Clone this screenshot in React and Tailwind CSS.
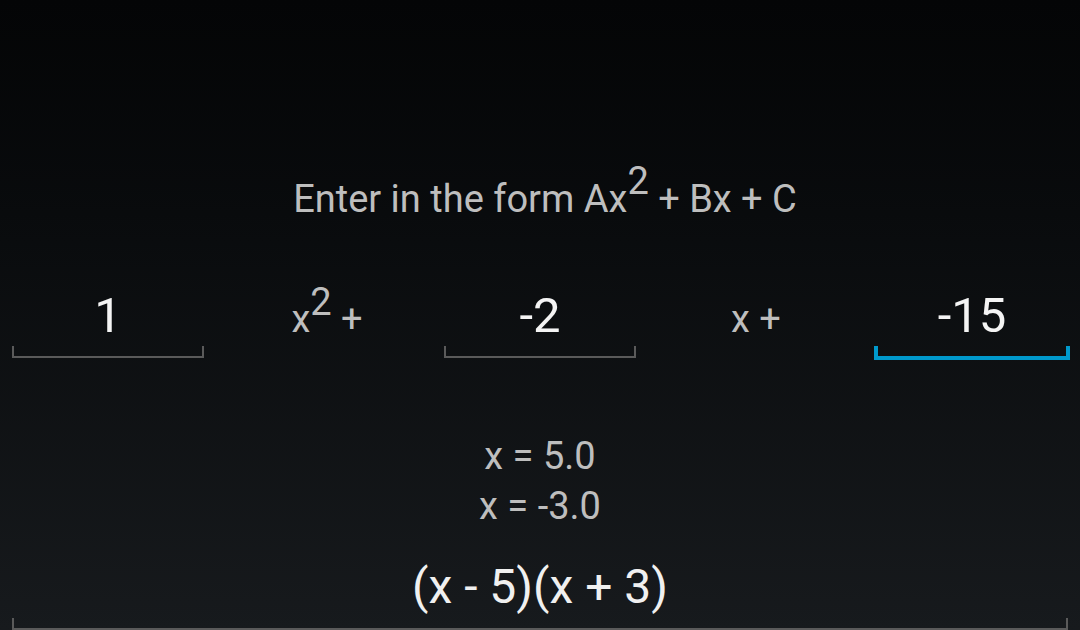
export default function App() {
  const font = { fontFamily: 'Roboto, "Noto Sans", sans-serif' };
  return (
    <div
      className="w-[1080px] h-[630px] overflow-hidden flex flex-col bg-linear-to-b from-[#040506] to-[#171a1d]"
      style={font}
    >
      <div className="pt-[177px] pl-[10px] text-center text-[38px] leading-[44px] text-[#bebebe]">
        Enter in the form Ax<span className="leading-0 align-[18px]">2</span> + Bx + C
      </div>

      <div className="mt-[65px] flex items-baseline">
        <div className="w-[216px] flex flex-col">
          <div className="text-center text-[49px] leading-[60px] text-[#f4f4f4]">1</div>
          <div className="mx-[12px] h-[12px] border-x-2 border-b-2 border-[#5a5a5a]" />
        </div>
        <div className="w-[216px] pl-[6px] text-center text-[38px] leading-[60px] text-[#bebebe]">
          x<span className="leading-0 align-[17px]">2</span> +
        </div>
        <div className="w-[216px] flex flex-col">
          <div className="text-center text-[49px] leading-[60px] text-[#f4f4f4]">-2</div>
          <div className="mx-[12px] h-[12px] border-x-2 border-b-2 border-[#5a5a5a]" />
        </div>
        <div className="w-[216px] text-center text-[38px] leading-[60px] text-[#bebebe]">x +</div>
        <div className="w-[216px] flex flex-col">
          <div className="text-center text-[49px] leading-[60px] text-[#f4f4f4]">-15</div>
          <div className="mx-[10px] h-[14px] border-x-4 border-b-4 border-[#0099cc]" />
        </div>
      </div>

      <div className="mt-[71px] text-center text-[38px] leading-[50px] text-[#bebebe]">
        <div>x = 5.0</div>
        <div>x = -3.0</div>
      </div>

      <div className="mt-[29px] text-center text-[48px] leading-[54px] text-[#f0f0f0]">
        (x - 5)(x + 3)
      </div>

      <div className="mt-[4px] mx-[12px] h-[12px] shrink-0 border-x-2 border-b-2 border-[#5a5a5a]" />
    </div>
  );
}
